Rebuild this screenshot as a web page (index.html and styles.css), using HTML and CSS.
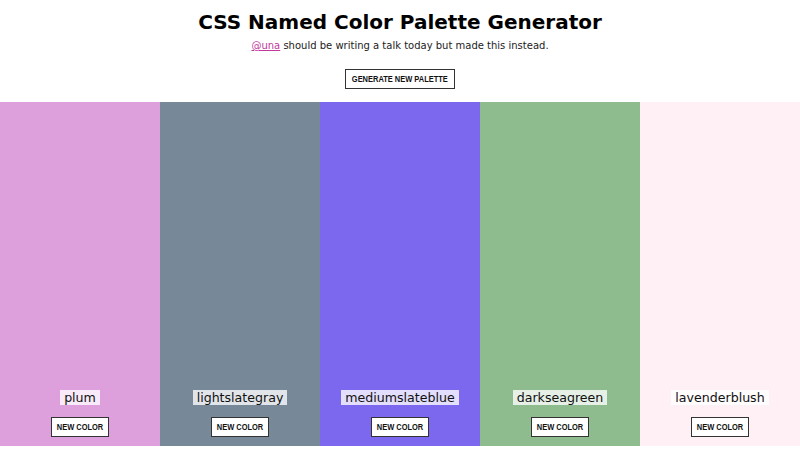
FILE: index.html
```html
<!DOCTYPE html>
<html lang="en">
<head>
  <meta charset="UTF-8">
  <title>CSS Named Color Palette Generator</title>
  <meta name="viewport" content="width=device-width, initial-scale=1">
  <link rel="stylesheet" href="styles.css">
</head>
<body>
  <header class="intro">
    <h1>CSS Named Color Palette Generator</h1>
    <p><a href="#">@una</a> should be writing a talk today but made this instead.</p>
    <button class="btn btn-wide"><span>Generate New Palette</span></button>
  </header>
  <main class="palette">
    <div class="swatch" style="background: plum">
      <span class="name">plum</span>
      <button class="btn"><span>New Color</span></button>
    </div>
    <div class="swatch" style="background: lightslategray">
      <span class="name">lightslategray</span>
      <button class="btn"><span>New Color</span></button>
    </div>
    <div class="swatch" style="background: mediumslateblue">
      <span class="name">mediumslateblue</span>
      <button class="btn"><span>New Color</span></button>
    </div>
    <div class="swatch" style="background: darkseagreen">
      <span class="name">darkseagreen</span>
      <button class="btn"><span>New Color</span></button>
    </div>
    <div class="swatch" style="background: lavenderblush">
      <span class="name">lavenderblush</span>
      <button class="btn"><span>New Color</span></button>
    </div>
  </main>
</body>
</html>
```

FILE: styles.css
```css
body {
  margin: 0;
  font-family: 'DejaVu Sans', sans-serif;
  color: #111;
  background: #fff;
}
.intro {
  text-align: center;
  padding-top: 10px;
  height: 92px;
}
.intro h1 {
  margin: 0;
  font-size: 20px;
  line-height: 24px;
  font-weight: 700;
  color: #000;
}
.intro p {
  margin: 6px 0 15px;
  font-size: 10px;
  line-height: 12px;
  color: #222;
}
.intro a {
  color: #c0399b;
}
.btn {
  display: inline-flex;
  justify-content: center;
  align-items: center;
  font-family: 'Liberation Sans', Arial, sans-serif;
  font-weight: 700;
  font-size: 9px;
  text-transform: uppercase;
  background: #fff;
  color: #111;
  border: 1px solid #333;
  width: 58px;
  height: 20px;
  padding: 0;
  cursor: pointer;
}
.btn-wide {
  width: 110px;
}
/* narrow caps, like a condensed face */
.btn span {
  display: inline-block;
  white-space: nowrap;
  transform: scaleX(0.83);
}
.palette {
  display: flex;
}
.swatch {
  flex: 1;
  height: 344px;
  display: flex;
  flex-direction: column;
  justify-content: flex-end;
  align-items: center;
  gap: 12px;
  padding-bottom: 9px;
  box-sizing: border-box;
}
.name {
  font-size: 12.6px;
  line-height: 15px;
  padding: 0 4px;
  background: rgba(255,255,255,0.78);
}
```
